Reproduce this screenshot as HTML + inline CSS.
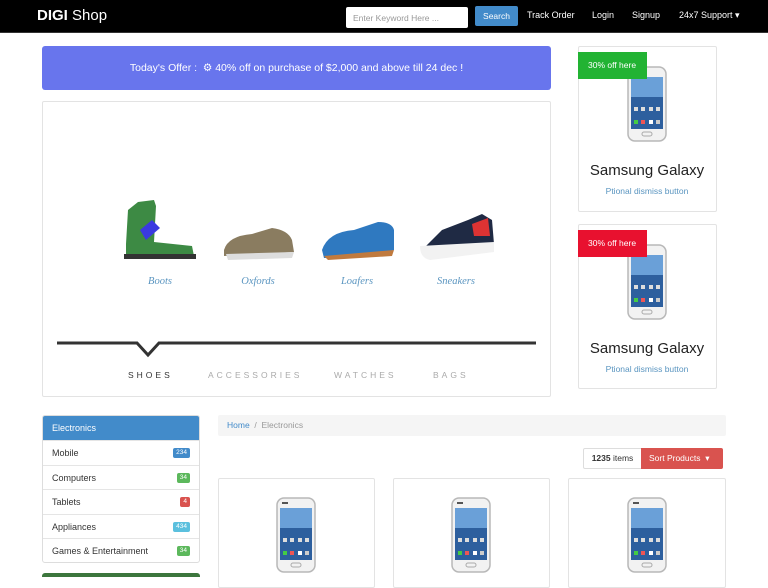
<!DOCTYPE html>
<html><head><meta charset="utf-8"><style>
*{box-sizing:border-box;margin:0;padding:0}
body{width:768px;height:576px;overflow:hidden;background:#fff;font-family:"Liberation Sans",sans-serif;position:relative;font-size:9px;color:#333}
.abs{position:absolute}
.nav{left:0;top:0;width:768px;height:33px;background:#000;border-bottom:1px solid #333}
.nav .brand{left:37px;top:7px;color:#fff;font-size:15px}
.nav .in{left:346px;top:7px;width:122px;height:21px;background:#fff;border-radius:2px;color:#999;font-size:8.5px;padding:6px 7px}
.nav .btn{left:475px;top:6px;width:43px;height:20px;background:#428bca;border-radius:2px;color:#fff;font-size:8.5px;text-align:center;line-height:20px}
.nav .l{top:10px;color:#fff;font-size:9px}
.offer{left:42px;top:46px;width:509px;height:44px;background:#6875ed;border-radius:3px;color:#fff;font-size:10.5px;text-align:center;line-height:44px}
.panel{left:42px;top:101px;width:509px;height:296px;border:1px solid #e3e3e3;border-radius:2px}
.lab{top:276px;width:80px;text-align:center;color:#5a95c0;font-family:"Liberation Serif",serif;font-style:italic;font-size:10.5px}
.tab{top:370px;font-size:8.5px;letter-spacing:3px;color:#aaa}
.card{border:1px solid #e3e3e3;border-radius:2px;background:#fff}
.badge{color:#fff;font-size:8.5px;padding:0 10px;line-height:27px;height:27px;width:69px}
.ct{width:138px;text-align:center;font-size:15px;color:#222}
.cl{width:138px;text-align:center;font-size:8.5px;color:#5a95c0}
.side{left:42px;top:415px;width:158px;height:148px;border:1px solid #ddd;border-radius:3px;overflow:hidden}
.side .h{height:24px;background:#428bca;color:#fff;font-size:9px;padding:0 9px;line-height:24px}
.side .it{height:24.6px;border-top:1px solid #e5e5e5;font-size:9px;padding:0 9px;line-height:24px;position:relative}
.side .b{position:absolute;right:9px;top:7px;height:10px;padding:0 3px;border-radius:2px;color:#fff;font-size:6.5px;line-height:10px}
.bc{left:218px;top:415px;width:508px;height:21px;background:#f5f5f5;border-radius:2px;font-size:8.5px;color:#999;padding:0 9px;line-height:21px}
</style></head><body>
<svg width="0" height="0" style="position:absolute"><defs>
<symbol id="ph" viewBox="0 0 40 76">
<rect x="1" y="1" width="38" height="74" rx="7" fill="#f2f2f2" stroke="#b8b8b8" stroke-width="1.5"/>
<rect x="4" y="11" width="32" height="52" fill="#2d5f9e"/>
<rect x="4" y="11" width="32" height="20" fill="#6aa0d8"/>
<rect x="7" y="41" width="4" height="4" fill="#ddd"/><rect x="14" y="41" width="4" height="4" fill="#ddd"/><rect x="22" y="41" width="4" height="4" fill="#ddd"/><rect x="29" y="41" width="4" height="4" fill="#ddd"/>
<rect x="7" y="54" width="4" height="4" fill="#4c4"/><rect x="14" y="54" width="4" height="4" fill="#e55"/><rect x="22" y="54" width="4" height="4" fill="#fff"/><rect x="29" y="54" width="4" height="4" fill="#ccc"/>
<rect x="15" y="66" width="10" height="4" rx="2" fill="none" stroke="#aaa"/>
<rect x="6" y="5" width="6" height="2" fill="#555"/>
</symbol></defs></svg>

<div class="abs nav">
<div class="abs brand"><b>DIGI</b> Shop</div>
<div class="abs in">Enter Keyword Here ...</div>
<div class="abs btn">Search</div>
<div class="abs l" style="left:527px">Track Order</div>
<div class="abs l" style="left:592px">Login</div>
<div class="abs l" style="left:632px">Signup</div>
<div class="abs l" style="left:679px">24x7 Support ▾</div>
</div>

<div class="abs offer">Today's Offer : &nbsp;⚙ 40% off on purchase of $2,000 and above till 24 dec !</div>

<div class="abs panel"></div>
<svg class="abs" style="left:42px;top:180px" width="509" height="200">
<path d="M84 64 L86 30 L96 22 L112 20 L114 26 L112 62 L150 66 L152 76 L84 78 Z" fill="#3d8a44"/>
<path d="M98 50 L110 40 L118 48 L104 60Z" fill="#3a3ae0"/>
<rect x="82" y="74" width="72" height="5" fill="#333"/>
<path d="M182 70 Q186 56 210 54 L230 48 Q246 50 250 60 L252 72 L182 76Z" fill="#8a7c60"/>
<path d="M184 74 L252 72 L250 78 L186 80Z" fill="#ddd"/>
<path d="M280 70 Q286 52 312 50 L336 42 Q350 42 352 50 L352 70 Q320 78 282 78Z" fill="#2f79c0"/>
<path d="M282 76 L352 70 L350 76 L286 80Z" fill="#c07a3e"/>
<path d="M380 70 L400 50 L426 40 L440 34 L450 40 L452 64 L382 76Z" fill="#1f2a44"/>
<path d="M430 44 L446 38 L448 56 L432 56Z" fill="#d33"/>
<path d="M378 66 L452 62 L452 72 L388 80 Q378 78 378 66Z" fill="#f2f2f2"/>
<path d="M15 163 L95 163 L106 175 L117 163 L494 163" fill="none" stroke="#333" stroke-width="3"/>
</svg>
<div class="abs lab" style="left:120px">Boots</div>
<div class="abs lab" style="left:218px">Oxfords</div>
<div class="abs lab" style="left:317px">Loafers</div>
<div class="abs lab" style="left:416px">Sneakers</div>
<div class="abs tab" style="left:128px;color:#333">SHOES</div>
<div class="abs tab" style="left:208px">ACCESSORIES</div>
<div class="abs tab" style="left:334px">WATCHES</div>
<div class="abs tab" style="left:433px">BAGS</div>

<div class="abs card" style="left:578px;top:46px;width:139px;height:166px"></div>
<svg class="abs" style="left:627px;top:66px" width="40" height="76"><use href="#ph"/></svg>
<div class="abs badge" style="left:578px;top:52px;background:#22b333">30% off here</div>
<div class="abs ct" style="left:578px;top:162px">Samsung Galaxy</div>
<div class="abs cl" style="left:578px;top:186px">Ptional dismiss button</div>

<div class="abs card" style="left:578px;top:224px;width:139px;height:165px"></div>
<svg class="abs" style="left:627px;top:244px" width="40" height="76"><use href="#ph"/></svg>
<div class="abs badge" style="left:578px;top:230px;background:#e8112f">30% off here</div>
<div class="abs ct" style="left:578px;top:340px">Samsung Galaxy</div>
<div class="abs cl" style="left:578px;top:364px">Ptional dismiss button</div>

<div class="abs side">
<div class="h">Electronics</div>
<div class="it">Mobile<span class="b" style="background:#428bca">234</span></div>
<div class="it">Computers<span class="b" style="background:#5cb85c">34</span></div>
<div class="it">Tablets<span class="b" style="background:#d9534f">4</span></div>
<div class="it">Appliances<span class="b" style="background:#5bc0de">434</span></div>
<div class="it">Games &amp; Entertainment<span class="b" style="background:#5cb85c">34</span></div>
</div>
<div class="abs" style="left:42px;top:573px;width:158px;height:4px;background:#3c763d;border-radius:3px 3px 0 0"></div>

<div class="abs bc"><span style="color:#428bca">Home</span> &nbsp;/&nbsp; Electronics</div>
<div class="abs" style="left:583px;top:448px;width:59px;height:21px;border:1px solid #ddd;border-radius:2px 0 0 2px;font-size:8.5px;line-height:19px;text-align:center"><b>1235</b> items</div>
<div class="abs" style="left:641px;top:448px;width:82px;height:21px;background:#d9534f;border-radius:0 2px 2px 0;color:#fff;font-size:8.5px;line-height:21px;padding-left:8px">Sort Products &nbsp;▾</div>

<div class="abs card" style="left:218px;top:478px;width:157px;height:110px"></div>
<div class="abs card" style="left:393px;top:478px;width:157px;height:110px"></div>
<div class="abs card" style="left:568px;top:478px;width:158px;height:110px"></div>
<svg class="abs" style="left:276px;top:497px" width="40" height="76"><use href="#ph"/></svg>
<svg class="abs" style="left:451px;top:497px" width="40" height="76"><use href="#ph"/></svg>
<svg class="abs" style="left:627px;top:497px" width="40" height="76"><use href="#ph"/></svg>
</body></html>
